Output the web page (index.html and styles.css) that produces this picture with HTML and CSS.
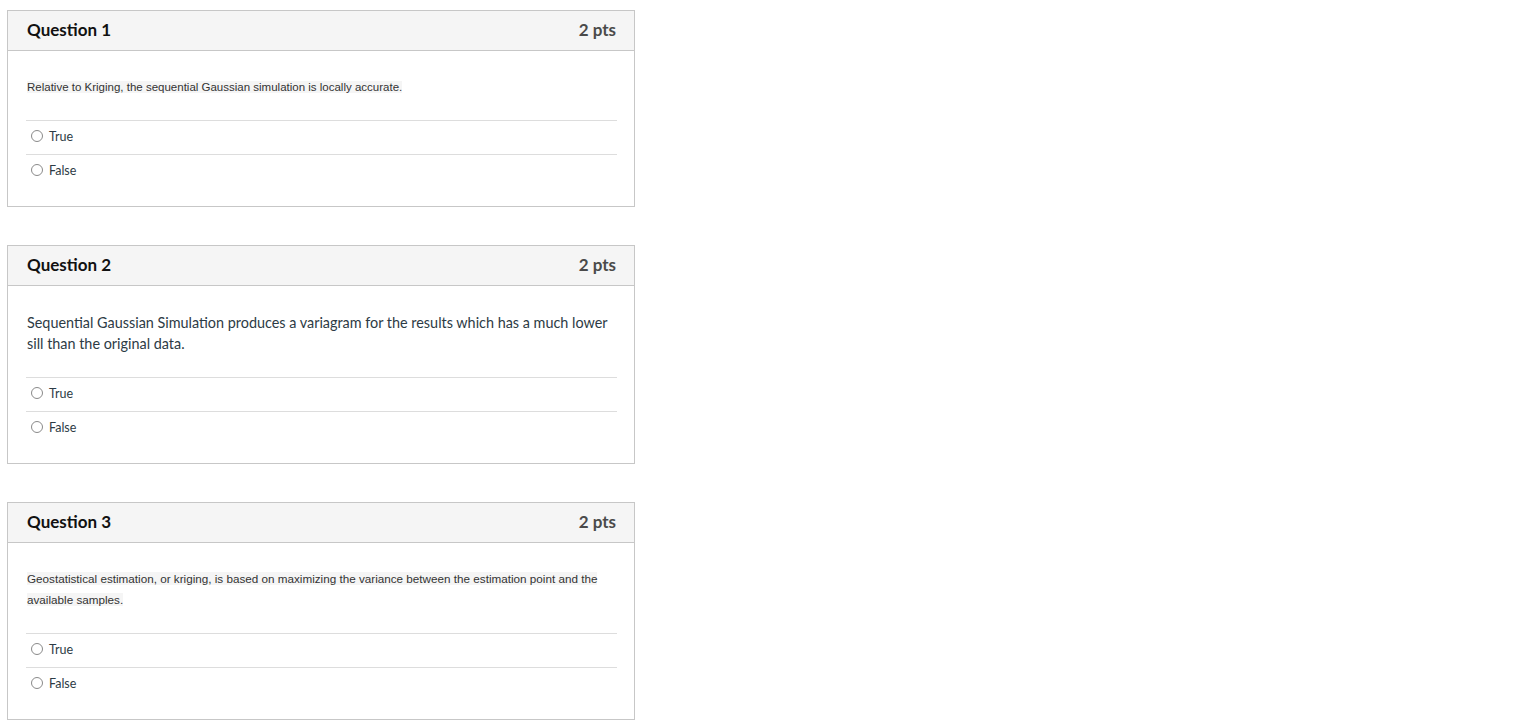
FILE: index.html
```html
<!DOCTYPE html>
<html lang="en">
<head>
<meta charset="utf-8">
<title>Quiz</title>
<link rel="stylesheet" href="styles.css">
</head>
<body>
<main class="quiz">
  <section class="question">
    <header class="q-head">
      <h2 class="q-title">Question 1</h2>
      <span class="q-pts">2 pts</span>
    </header>
    <div class="q-body">
      <p class="q-text arial"><span class="hl">Relative to Kriging, the sequential Gaussian simulation is locally accurate.</span></p>
      <div class="answers">
        <label class="answer"><span class="radio"></span><span class="a-label">True</span></label>
        <label class="answer"><span class="radio"></span><span class="a-label">False</span></label>
      </div>
    </div>
  </section>

  <section class="question">
    <header class="q-head">
      <h2 class="q-title">Question 2</h2>
      <span class="q-pts">2 pts</span>
    </header>
    <div class="q-body">
      <p class="q-text lato">Sequential Gaussian Simulation produces a variagram for the results which has a much lower sill than the original data.</p>
      <div class="answers">
        <label class="answer"><span class="radio"></span><span class="a-label">True</span></label>
        <label class="answer"><span class="radio"></span><span class="a-label">False</span></label>
      </div>
    </div>
  </section>

  <section class="question">
    <header class="q-head">
      <h2 class="q-title">Question 3</h2>
      <span class="q-pts">2 pts</span>
    </header>
    <div class="q-body">
      <p class="q-text arial wide"><span class="hl">Geostatistical estimation, or kriging, is based on maximizing the variance between the estimation point and the available samples.</span></p>
      <div class="answers">
        <label class="answer"><span class="radio"></span><span class="a-label">True</span></label>
        <label class="answer"><span class="radio"></span><span class="a-label">False</span></label>
      </div>
    </div>
  </section>
</main>
</body>
</html>
```

FILE: styles.css
```css
html, body {
  margin: 0;
  padding: 0;
  background: #ffffff;
}

body {
  font-family: Lato, "Liberation Sans", sans-serif;
  color: #2d3b45;
}

.quiz {
  display: flex;
  flex-direction: column;
  gap: 38px;
  padding: 10px 0 0 7px;
  width: 628px;
}

.question {
  border: 1px solid #c7c7c7;
  background: #ffffff;
}

.q-head {
  display: flex;
  align-items: center;
  justify-content: space-between;
  height: 40px;
  padding: 0 18px 2px 19px;
  box-sizing: border-box;
  background: #f5f5f5;
  border-bottom: 1px solid #c7c7c7;
}

.q-title {
  margin: 0;
  font-size: 17px;
  font-weight: 700;
  color: #111111;
}

.q-pts {
  font-size: 17px;
  font-weight: 700;
  color: #4a4a4a;
}

.q-body {
  padding: 26px 17px 18px 18px;
}

.q-text {
  margin: 0 0 22px 1px;
  line-height: 21px;
  color: #2d3b45;
}

.q-text.arial {
  font-family: "Liberation Sans", Arial, sans-serif;
  font-size: 11.5px;
  color: #333333;
}

.q-text.arial.wide {
  font-size: 11.7px;
  margin-top: -1px;
  margin-bottom: 23px;
}

.q-text.lato {
  font-family: Lato, "Liberation Sans", sans-serif;
  font-size: 14.4px;
  color: #2d3b45;
  margin-bottom: 23px;
}

.hl {
  background: #f5f5f5;
}

.answers {
  display: flex;
  flex-direction: column;
}

.answer {
  display: flex;
  align-items: center;
  gap: 6px;
  height: 34px;
  box-sizing: border-box;
  padding: 0 0 3px 5px;
  border-top: 1px solid #dddddd;
  font-size: 12px;
  color: #2d3b45;
}

.radio {
  width: 10px;
  height: 10px;
  border: 1px solid #8a8a8a;
  border-radius: 50%;
  background: #ffffff;
  flex: none;
}

.a-label {
  font-family: Lato, "Liberation Sans", sans-serif;
  font-size: 12.5px;
  color: #2d3b45;
}
```
